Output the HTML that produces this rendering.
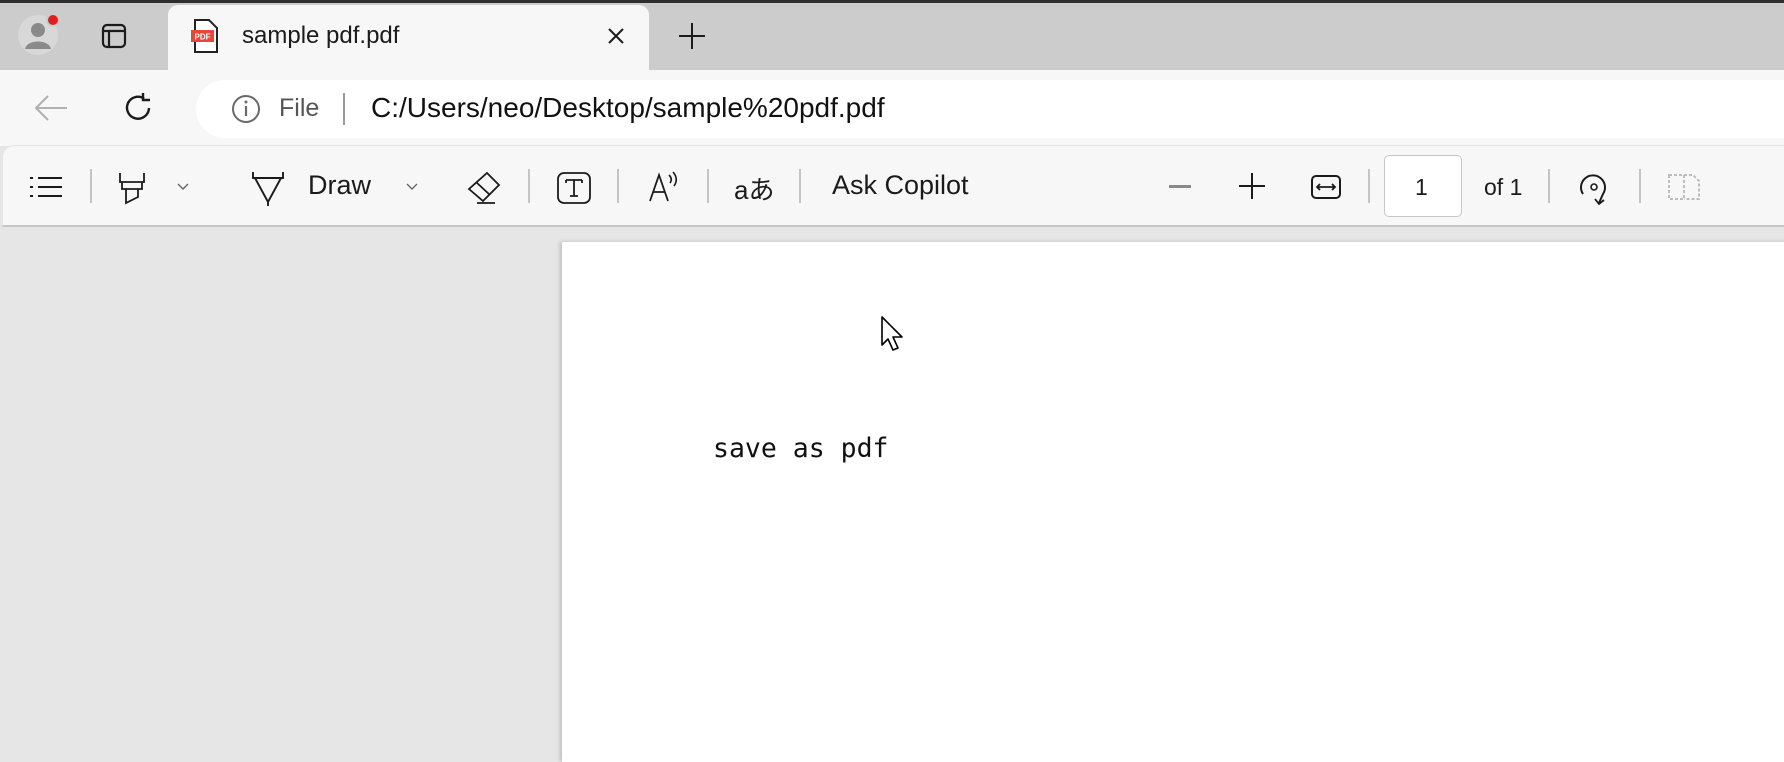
<!DOCTYPE html>
<html><head><meta charset="utf-8"><style>
*{margin:0;padding:0;box-sizing:border-box}
body{width:1784px;height:748px;overflow:hidden;background:#e6e6e6;font-family:"Liberation Sans",sans-serif;position:relative;color:#1b1b1b}
.a{position:absolute}
svg{position:absolute;overflow:visible}
.sep{position:absolute;width:2px;height:34px;top:169px;background:#c4c4c4}
.t{position:absolute;white-space:nowrap}
</style></head><body>
<div class="a" style="left:0;top:0;width:1784px;height:70px;background:#cccccc;border-top:3px solid #2e2e2e"></div>
<svg style="left:18px;top:15px" width="40" height="40" viewBox="0 0 40 40"><circle cx="20" cy="20" r="20" fill="#d8d8d8"/><circle cx="20" cy="15" r="7" fill="#8a8a8a"/><path d="M7 34 C9 24 31 24 33 34 Z" fill="#8a8a8a"/><circle cx="35" cy="5" r="6" fill="#e02020" stroke="#cccccc" stroke-width="2"/></svg>
<svg style="left:101px;top:23px" width="26" height="26" viewBox="0 0 26 26"><rect x="2" y="2" width="22" height="22" rx="4" fill="none" stroke="#1b1b1b" stroke-width="2.2"/><line x1="2" y1="8" x2="24" y2="8" stroke="#1b1b1b" stroke-width="2.2"/><line x1="8" y1="8" x2="8" y2="24" stroke="#1b1b1b" stroke-width="2.2"/></svg>
<div class="a" style="left:168px;top:5px;width:481px;height:66px;background:#f7f7f7;border-radius:10px 10px 0 0"></div>
<svg style="left:191px;top:19px" width="28" height="34" viewBox="0 0 28 34"><path d="M4 1 H18 L26 9 V33 H4 Z" fill="#fff" stroke="#222" stroke-width="2"/><rect x="0" y="11" width="23" height="12" fill="#e8463c"/><text x="11.5" y="20.5" font-size="8" font-weight="bold" fill="#fff" text-anchor="middle" font-family="Liberation Sans">PDF</text></svg>
<div class="t" style="left:242px;top:22px;font-size:24px">sample pdf.pdf</div>
<svg style="left:607px;top:27px" width="18" height="18" viewBox="0 0 18 18"><path d="M2 2 L16 16 M16 2 L2 16" stroke="#1b1b1b" stroke-width="2"/></svg>
<svg style="left:678px;top:22px" width="28" height="28" viewBox="0 0 28 28"><path d="M14 1 V27 M1 14 H27" stroke="#1b1b1b" stroke-width="2"/></svg>
<div class="a" style="left:0;top:70px;width:1784px;height:76px;background:#f7f7f7"></div>
<svg style="left:34px;top:94px" width="34" height="28" viewBox="0 0 34 28"><path d="M2 14 H33 M14 2 L2 14 L14 26" fill="none" stroke="#b0b0b0" stroke-width="2"/></svg>
<svg style="left:122px;top:92px" width="32" height="32" viewBox="0 0 32 32"><path d="M27 16 A11 11 0 1 1 22 6.5" fill="none" stroke="#1b1b1b" stroke-width="2.4"/><path d="M21 1 V8 H28" fill="none" stroke="#1b1b1b" stroke-width="2.4"/></svg>
<div class="a" style="left:196px;top:80px;width:1620px;height:58px;background:#fff;border-radius:29px"></div>
<svg style="left:231px;top:94px" width="30" height="30" viewBox="0 0 30 30"><circle cx="15" cy="15" r="13" fill="none" stroke="#6a6a6a" stroke-width="2"/><line x1="15" y1="12" x2="15" y2="22" stroke="#6a6a6a" stroke-width="2.2"/><circle cx="15" cy="8" r="1.5" fill="#6a6a6a"/></svg>
<div class="t" style="left:279px;top:94px;font-size:25px;color:#555">File</div>
<div class="a" style="left:343px;top:93px;width:2px;height:32px;background:#9a9a9a"></div>
<div class="t" style="left:371px;top:92px;font-size:28px;color:#111">C:/Users/neo/Desktop/sample%20pdf.pdf</div>
<div class="a" style="left:2px;top:145px;width:1782px;height:82px;background:#f7f7f7;border-top:1px solid #e4e4e4;border-left:1px solid #e4e4e4;border-bottom:2px solid #c6c6c6;border-radius:12px 0 0 0"></div>
<svg style="left:30px;top:176px" width="32" height="22" viewBox="0 0 32 22"><g stroke="#1b1b1b" stroke-width="2"><path d="M0 2h3M0 11h3M0 20h3M8 2h24M8 11h24M8 20h24"/></g></svg>
<div class="sep" style="left:90px"></div>
<svg style="left:118px;top:172px" width="28" height="32" viewBox="0 0 28 32"><path d="M2 1 V10 H26 V1 M4 10 V17 H24 V10 M8 17 V31 L20 25 V17" fill="none" stroke="#1b1b1b" stroke-width="1.8"/></svg>
<svg style="left:177px;top:183px" width="12" height="8" viewBox="0 0 12 8"><path d="M1 1 L6 6 L11 1" fill="none" stroke="#666" stroke-width="1.4"/></svg>
<svg style="left:252px;top:172px" width="32" height="34" viewBox="0 0 32 34"><path d="M1 0 V6 H31 V0 M3 6 L16 30 L29 6 M16 30 V34" fill="none" stroke="#1b1b1b" stroke-width="1.9"/></svg>
<div class="t" style="left:308px;top:170px;font-size:27px">Draw</div>
<svg style="left:406px;top:183px" width="12" height="8" viewBox="0 0 12 8"><path d="M1 1 L6 6 L11 1" fill="none" stroke="#666" stroke-width="1.4"/></svg>
<svg style="left:467px;top:171px" width="34" height="34" viewBox="0 0 34 34"><path d="M20 2 L32 14 L16 30 L2 18 Z M9 11 L23 24 M10 32 H28" fill="none" stroke="#1b1b1b" stroke-width="1.8"/></svg>
<div class="sep" style="left:528px"></div>
<svg style="left:557px;top:172px" width="34" height="32" viewBox="0 0 34 32"><rect x="1" y="1" width="32" height="30" rx="6" fill="none" stroke="#1b1b1b" stroke-width="1.8"/><path d="M9 8 H25 M9 8 V11 M25 8 V11 M17 8 V24 M13 24 H21" fill="none" stroke="#1b1b1b" stroke-width="1.8"/></svg>
<div class="sep" style="left:617px"></div>
<svg style="left:648px;top:171px" width="32" height="32" viewBox="0 0 32 32"><path d="M2 30 L11 4 L20 30 M5 21 H17" fill="none" stroke="#1b1b1b" stroke-width="1.8"/><path d="M21 4 Q25 8 22 12 M25 1 Q31 8 26 15" fill="none" stroke="#1b1b1b" stroke-width="1.6"/></svg>
<div class="sep" style="left:707px"></div>
<div class="t" style="left:734px;top:170px;font-size:26px;font-family:'Liberation Sans','Noto Sans CJK JP',sans-serif">aあ</div>
<div class="sep" style="left:799px"></div>
<div class="t" style="left:832px;top:170px;font-size:27px">Ask Copilot</div>
<div class="a" style="left:1169px;top:185px;width:22px;height:3px;background:#8a8a8a"></div>
<svg style="left:1239px;top:173px" width="26" height="26" viewBox="0 0 26 26"><path d="M13 0 V26 M0 13 H26" stroke="#1b1b1b" stroke-width="2"/></svg>
<svg style="left:1311px;top:175px" width="30" height="24" viewBox="0 0 30 24"><rect x="1" y="1" width="28" height="22" rx="4" fill="none" stroke="#1b1b1b" stroke-width="2"/><path d="M6 12 H24 M9 9 L6 12 L9 15 M21 9 L24 12 L21 15" fill="none" stroke="#1b1b1b" stroke-width="1.8"/></svg>
<div class="sep" style="left:1368px"></div>
<div class="a" style="left:1384px;top:155px;width:78px;height:62px;background:#fff;border:1.5px solid #c6c6c6;border-radius:5px"></div>
<div class="t" style="left:1415px;top:174px;font-size:23px">1</div>
<div class="t" style="left:1484px;top:174px;font-size:23px">of 1</div>
<div class="sep" style="left:1548px"></div>
<svg style="left:1577px;top:170px" width="34" height="36" viewBox="0 0 34 36"><path d="M6 24 A12 12 0 1 1 26 24 L22 33" fill="none" stroke="#1b1b1b" stroke-width="2"/><path d="M18 29 L22 34 L27 30" fill="none" stroke="#1b1b1b" stroke-width="1.8"/><circle cx="17" cy="17" r="3" fill="none" stroke="#1b1b1b" stroke-width="1.6"/></svg>
<div class="sep" style="left:1639px"></div>
<svg style="left:1668px;top:174px" width="32" height="26" viewBox="0 0 32 26"><path d="M1 1 H16 V25 H1 Z M16 1 H25 L31 7 V25 H16" fill="none" stroke="#bdbdbd" stroke-width="2" stroke-dasharray="3 2"/></svg>
<div class="a" style="left:562px;top:242px;width:1230px;height:520px;background:#fff;box-shadow:-2px 0 4px rgba(0,0,0,0.18)"></div>
<div class="t" style="left:713px;top:433px;font-size:26.5px;font-family:'DejaVu Sans Mono',monospace;color:#111">save as pdf</div>
<svg style="left:881px;top:316px" width="26" height="40" viewBox="0 0 26 40"><path d="M1 1 V29 L7 23 L12 34 L17 32 L12 21 L21 21 Z" fill="#fff" stroke="#000" stroke-width="1.6" stroke-linejoin="round"/></svg>
</body></html>
